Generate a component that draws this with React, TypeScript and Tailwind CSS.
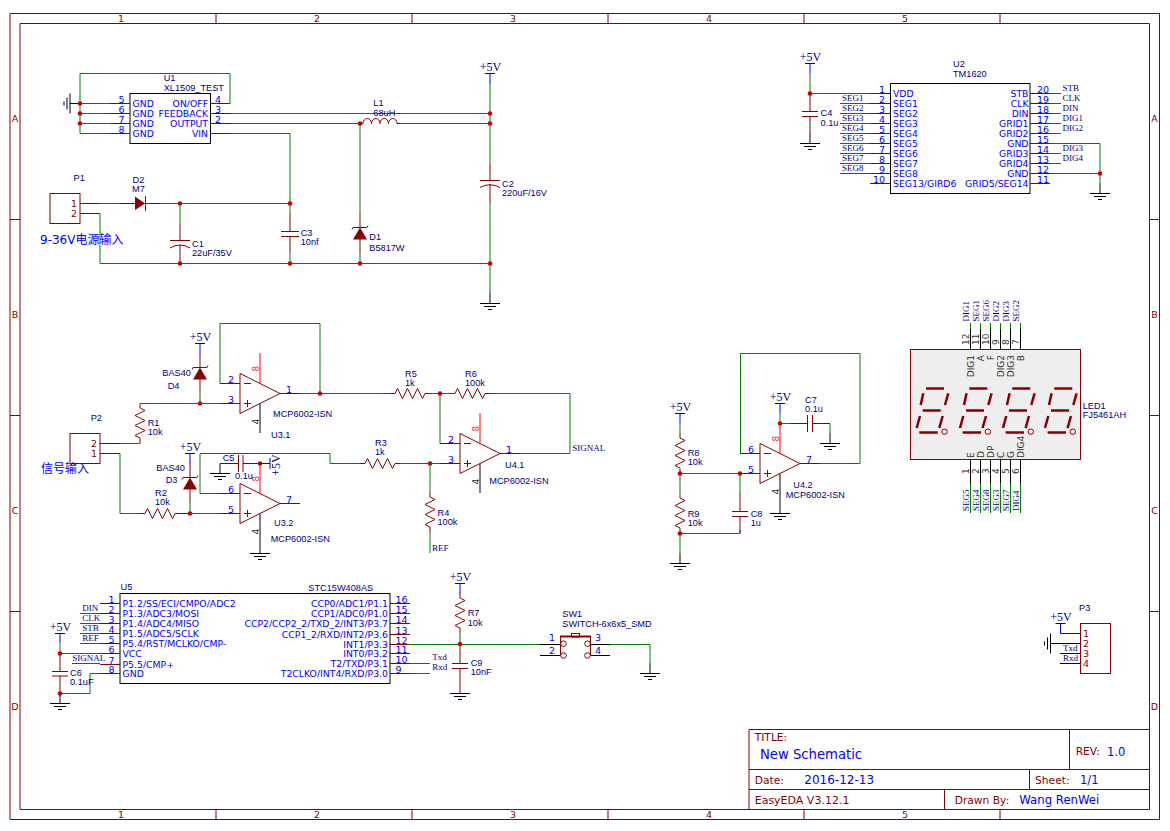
import type { ReactNode } from 'react';

// every class written out so Tailwind picks it up
const sans = "font-['DejaVu_Sans','Noto_Sans_CJK_SC',sans-serif]";
const arial = "font-['Liberation_Sans',sans-serif]";
const serif = "font-['Liberation_Serif',serif]";

const PIN_NAME = `${sans} text-[9.3px] fill-[#0000ff]`;
const PIN_NUM = `${sans} text-[9.5px] fill-[#0000ff]`;
const LABEL = `${arial} text-[9.2px] fill-[#000080]`;
const NET = `${serif} text-[9px] fill-[#000080]`;
const POWER = `${serif} text-[12px] fill-[#000080]`;
const RED_NUM = `${sans} text-[9.5px] fill-[#880000]`;
const LED_TXT = `${sans} text-[9px] fill-[#333333]`;
const TITLE_RED = `${sans} text-[10.7px] fill-[#880000]`;

type Anchor = 'start' | 'middle' | 'end';

function T({ x, y, c = LABEL, a, children }: { x: number; y: number; c?: string; a?: Anchor; children: ReactNode }) {
  return (
    <text x={x} y={y} textAnchor={a} className={c}>
      {children}
    </text>
  );
}

// text read from bottom to top
function RT({ x, y, c = LABEL, a, children }: { x: number; y: number; c?: string; a?: Anchor; children: ReactNode }) {
  return (
    <text x={x} y={y} textAnchor={a} transform={`rotate(-90 ${x} ${y})`} className={c}>
      {children}
    </text>
  );
}

const Wire = ({ d }: { d: string }) => <path d={d} className="fill-none stroke-[#008000] stroke-1" />;
const Pin = ({ d }: { d: string }) => <path d={d} className="fill-none stroke-[#880000] stroke-1" />;
const Blk = ({ d }: { d: string }) => <path d={d} className="fill-none stroke-black stroke-1" />;
const Blue = ({ d }: { d: string }) => <path d={d} className="fill-none stroke-[#0000ff] stroke-1" />;
const Navy = ({ d }: { d: string }) => <path d={d} className="fill-none stroke-[#000080] stroke-1" />;
const Hot = ({ d }: { d: string }) => <path d={d} className="fill-none stroke-[#ff0000] stroke-1" />;
const Dot = ({ x, y }: { x: number; y: number }) => <circle cx={x} cy={y} r={2.3} className="fill-[#cc0000]" />;

// ground symbol, bar at y
function Gnd({ x, y }: { x: number; y: number }) {
  return <Blk d={`M${x - 10} ${y}H${x + 10}M${x - 6} ${y + 3}H${x + 6}M${x - 2} ${y + 6}H${x + 2}`} />;
}

function GndLeft({ x, y }: { x: number; y: number }) {
  return <Blk d={`M${x} ${y - 10}V${y + 10}M${x - 3} ${y - 6}V${y + 6}M${x - 6} ${y - 2}V${y + 2}`} />;
}

// +5V flag with the short blue stub under it
function Vcc({ x, y }: { x: number; y: number }) {
  return (
    <>
      <T x={x + 0.5} y={y - 2.8} c={POWER} a="middle">+5V</T>
      <Navy d={`M${x - 5} ${y}H${x + 5}`} />
      <Blue d={`M${x} ${y}V${y + 10}`} />
    </>
  );
}

// 30px long zigzags
const ResH = ({ x, y }: { x: number; y: number }) => <Pin d={`M${x} ${y}l2.5 -5l5 10l5 -10l5 10l5 -10l5 10l2.5 -5`} />;
const ResV = ({ x, y }: { x: number; y: number }) => <Pin d={`M${x} ${y}l5 2.5l-10 5l10 5l-10 5l10 5l-10 5l5 2.5`} />;

function Opamp({ x, y, nums }: { x: number; y: number; nums: [string, string, string] }) {
  return (
    <>
      <path d={`M${x} ${y - 20}L${x + 40} ${y}L${x} ${y + 20}Z`} className="fill-white stroke-[#880000] stroke-1" />
      <Pin d={`M${x - 20} ${y - 10}H${x}M${x - 20} ${y + 10}H${x}M${x + 40} ${y}H${x + 60}`} />
      <Pin d={`M${x + 4} ${y - 10}h7M${x + 4} ${y + 10}h7M${x + 7.5} ${y + 6.5}v7`} />
      <T x={x - 9} y={y - 11} c={PIN_NUM} a="middle">{nums[0]}</T>
      <T x={x - 9} y={y + 9} c={PIN_NUM} a="middle">{nums[1]}</T>
      <T x={x + 49} y={y - 1} c={PIN_NUM} a="middle">{nums[2]}</T>
      <RT x={x + 19} y={y - 25} c={`${sans} text-[9px] fill-[#ff3030]`} a="middle">8</RT>
      <RT x={x + 19} y={y + 28} c={`${sans} text-[9px] fill-[#222222]`} a="middle">4</RT>
    </>
  );
}

// schottky pointing up, y is the tip
function DiodeUp({ x, y }: { x: number; y: number }) {
  return (
    <>
      <path d={`M${x} ${y}L${x - 7} ${y + 12}H${x + 7}Z`} className="fill-[#880000]" />
      <Pin d={`M${x - 8} ${y + 2}l1 -2h14l1 -2`} />
    </>
  );
}

function SevenSeg({ dx }: { dx: number }) {
  return (
    <g transform={`translate(${dx} 0)`}>
      <path
        d="M926 388.5H944M923.3 393.3L920.7 405M948.3 393.3L945 405M922.7 410.5H940.7M920 416L916.7 428M942.7 416L939.3 428M919.3 432.5H937.7"
        className="fill-none stroke-[#880000] stroke-[2.5px]"
      />
      <circle cx={944.5} cy={431.7} r={2.7} className="fill-none stroke-[#880000] stroke-1" />
    </g>
  );
}

const U2_LEFT = ['VDD', 'SEG1', 'SEG2', 'SEG3', 'SEG4', 'SEG5', 'SEG6', 'SEG7', 'SEG8', 'SEG13/GIRD6'];
const U2_RIGHT = [
  ['20', 'STB', 'STB'], ['19', 'CLK', 'CLK'], ['18', 'DIN', 'DIN'], ['17', 'GRID1', 'DIG1'], ['16', 'GRID2', 'DIG2'],
  ['15', 'GND', ''], ['14', 'GRID3', 'DIG3'], ['13', 'GRID4', 'DIG4'], ['12', 'GND', ''], ['11', 'GRID5/SEG14', ''],
];
const U5_LEFT: [number, string, string][] = [
  [603.5, 'P1.2/SS/ECI/CMPO/ADC2', ''],
  [613.5, 'P1.3/ADC3/MOSI', 'DIN'],
  [623.5, 'P1.4/ADC4/MISO', 'CLK'],
  [633.5, 'P1.5/ADC5/SCLK', 'STB'],
  [643.5, 'P5.4/RST/MCLKO/CMP-', 'REF'],
  [653.5, 'VCC', ''],
  [664.5, 'P5.5/CMP+', ''],
  [673.5, 'GND', ''],
];
const U5_RIGHT: [number, string, string][] = [
  [603.5, '16', 'CCP0/ADC1/P1.1'],
  [613.5, '15', 'CCP1/ADC0/P1.0'],
  [623.5, '14', 'CCP2/CCP2_2/TXD_2/INT3/P3.7'],
  [634.5, '13', 'CCP1_2/RXD/INT2/P3.6'],
  [644.5, '12', 'INT1/P3.3'],
  [653.5, '11', 'INT0/P3.2'],
  [663.5, '10', 'T2/TXD/P3.1'],
  [673.5, '9', 'T2CLKO/INT4/RXD/P3.0'],
];
const LED_X = [970.5, 980.5, 990.5, 1000.5, 1010.5, 1020.5];

export default function App() {
  return (
    <div className="w-[1170px] h-[831px] bg-white overflow-hidden">
      <svg width={1170} height={831} viewBox="0 0 1170 831">
        {/* sheet frame */}
        <Pin d="M10 13.5H1159.5V819.5H10ZM20 23.5H1149.5V809.5H20Z" />
        <Pin d="M216 13.5V23.5M412 13.5V23.5M608 13.5V23.5M804 13.5V23.5M1000 13.5V23.5" />
        <Pin d="M216 809.5V819.5M412 809.5V819.5M608 809.5V819.5M804 809.5V819.5M1000 809.5V819.5" />
        <Pin d="M10 219.5H20M10 415.5H20M10 611.5H20M1149.5 219.5H1159.5M1149.5 415.5H1159.5M1149.5 611.5H1159.5" />
        {['1', '2', '3', '4', '5'].map((n, i) => (
          <g key={n}>
            <T x={121 + i * 196} y={22} c={RED_NUM} a="middle">{n}</T>
            <T x={121 + i * 196} y={818} c={RED_NUM} a="middle">{n}</T>
          </g>
        ))}
        {['A', 'B', 'C', 'D'].map((n, i) => (
          <g key={n}>
            <T x={15} y={121.5 + i * 196} c={RED_NUM} a="middle">{n}</T>
            <T x={1154.5} y={121.5 + i * 196} c={RED_NUM} a="middle">{n}</T>
          </g>
        ))}

        {/* U1 */}
        <Wire d="M80 133.5V73.5H230V103.5M80 103.5H110M80 113.5H110M80 123.5H110M80 133.5H110" />
        <Blk d="M70 103.5H80" />
        <GndLeft x={70} y={103.5} />
        <Dot x={80} y={103.5} />
        <Dot x={80} y={113.5} />
        <Dot x={80} y={123.5} />
        <rect x={130} y={93.5} width={80.5} height={50} className="fill-white stroke-black stroke-1" />
        <Pin d="M110 103.5H130M110 113.5H130M110 123.5H130M110 133.5H130M210 103.5H230M210 113.5H230M210 123.5H230M210 133.5H230" />
        <T x={163.7} y={81}>U1</T>
        <T x={163.7} y={91}>XL1509_TEST</T>
        {['5', '6', '7', '8'].map((n, i) => (
          <g key={n}>
            <T x={121.5} y={103 + i * 10} c={PIN_NUM} a="middle">{n}</T>
            <T x={132.5} y={106.5 + i * 10} c={PIN_NAME}>GND</T>
          </g>
        ))}
        {[['4', 'ON/OFF'], ['3', 'FEEDBACK'], ['2', 'OUTPUT'], ['', 'VIN']].map(([n, s], i) => (
          <g key={s}>
            <T x={218} y={103 + i * 10} c={PIN_NUM} a="middle">{n}</T>
            <T x={208} y={106.5 + i * 10} c={PIN_NAME} a="end">{s}</T>
          </g>
        ))}
        <Wire d="M230 113.5H490M230 123.5H360M400 123.5H490M230 133.5H290V203.5" />
        <Dot x={360} y={123.5} />
        <T x={373.3} y={106}>L1</T>
        <T x={373.3} y={116}>68uH</T>
        <Pin d="M360 123.5H363a4.25 5 0 0 1 8.5 0a4.25 5 0 0 1 8.5 0a4.25 5 0 0 1 8.5 0a4.25 5 0 0 1 8.5 0H400" />

        {/* P1, D2, input caps */}
        <rect x={50} y={193.5} width={30} height={30} className="fill-none stroke-[#880000] stroke-1" />
        <Pin d="M80 203.5H100M80 213.5H100" />
        <T x={74} y={206.5} c={RED_NUM} a="middle">1</T>
        <T x={74} y={216.5} c={RED_NUM} a="middle">2</T>
        <T x={73.5} y={180.5}>P1</T>
        <T x={40} y={244} c={`${sans} text-[12px] fill-[#0000ff]`}>9-36V电源输入</T>
        <Wire d="M100 203.5H120M160 203.5H290M100 213.5V263.5H490" />
        <Pin d="M120 203.5H160" />
        <path d="M135 196.5L145 203.5L135 210Z" className="fill-[#880000]" />
        <Pin d="M145.5 196V211" />
        <T x={132.5} y={183}>D2</T>
        <T x={132} y={192.3}>M7</T>
        <Wire d="M180 203.5V223.5M290 203.5V213M290 253V263.5M360 123.5V213M360 253V263.5M490 83V163M490 203V293" />
        <Pin d="M180 223.5V240.5M180 245V263.5M170 240.5H190M170 248Q180 242 190 248" />
        <T x={192} y={247}>C1</T>
        <T x={192} y={255.7}>22uF/35V</T>
        <Pin d="M290 213V231.5M290 236.5V253M281 231.5H299M281 236.5H299" />
        <T x={300.7} y={236}>C3</T>
        <T x={300.7} y={245}>10nf</T>
        <Pin d="M360 213V227M360 239V253" />
        <DiodeUp x={360} y={227.5} />
        <T x={369.3} y={239.7}>D1</T>
        <T x={369.3} y={251}>B5817W</T>
        <Dot x={180} y={203.5} />
        <Dot x={290} y={203.5} />
        <Dot x={180} y={263.5} />
        <Dot x={290} y={263.5} />
        <Dot x={360} y={263.5} />

        {/* C2 rail */}
        <Vcc x={490} y={73.5} />
        <Pin d="M490 163V180.5M490 184V203M480 180.5H500M480 187.5Q490 182 500 187.5" />
        <T x={502} y={186.7}>C2</T>
        <T x={502} y={195.7}>220uF/16V</T>
        <Blk d="M490 293V303.5" />
        <Gnd x={490} y={303.5} />
        <Dot x={490} y={113.5} />
        <Dot x={490} y={123.5} />
        <Dot x={490} y={263.5} />

        {/* U2 */}
        <Vcc x={810} y={63.5} />
        <Wire d="M810 73.5V93.5M810 93.5H870" />
        <Pin d="M810 93.5V111.5M810 116.5V133M802 111.5H818M802 116.5H818" />
        <Blk d="M810 133V143.5" />
        <Gnd x={810} y={143.5} />
        <Dot x={810} y={93.5} />
        <T x={820.5} y={116}>C4</T>
        <T x={820.5} y={125.7}>0.1u</T>
        <T x={953} y={67}>U2</T>
        <T x={953} y={77}>TM1620</T>
        <rect x={890.5} y={83.5} width={139.5} height={110} className="fill-white stroke-black stroke-1" />
        {U2_LEFT.map((s, i) => {
          const y = 93.5 + i * 10;
          return (
            <g key={s}>
              {i > 0 && i < 9 && <Wire d={`M840 ${y}H870`} />}
              {i > 0 && i < 9 && <T x={842} y={y - 2.5} c={NET}>{s}</T>}
              <Pin d={`M870 ${y}H890`} />
              <T x={885} y={y - 1} c={PIN_NUM} a="end">{i + 1}</T>
              <T x={893} y={y + 3} c={PIN_NAME}>{s}</T>
            </g>
          );
        })}
        {U2_RIGHT.map(([n, s, net], i) => {
          const y = 93.5 + i * 10;
          return (
            <g key={n}>
              {net && <Wire d={`M1050 ${y}H1061`} />}
              {net && <T x={1062.5} y={y - 3} c={NET}>{net}</T>}
              <Pin d={`M1030 ${y}H1050`} />
              <T x={1037} y={y - 1} c={PIN_NUM}>{n}</T>
              <T x={1028.5} y={y + 3} c={PIN_NAME} a="end">{s}</T>
            </g>
          );
        })}
        <Wire d="M1050 143.5H1100V183M1050 173.5H1100" />
        <Blk d="M1100 183V193.5" />
        <Gnd x={1100} y={193.5} />
        <Dot x={1100} y={173.5} />

        {/* U3.1 with P2, R1, D4 */}
        <Wire d="M220 383.5V323.5H320V393.5M300 393.5H390M430 393.5H455M490 393.5H570V453.5H520M440 393.5V443.5" />
        <Hot d="M260 353V383" />
        <Blk d="M260 403V433" />
        <Opamp x={240} y={393.5} nums={['2', '3', '1']} />
        <Dot x={320} y={393.5} />
        <T x={273} y={417}>MCP6002-ISN</T>
        <T x={271} y={438}>U3.1</T>

        <rect x={70} y={433.5} width={30} height={30} className="fill-none stroke-[#880000] stroke-1" />
        <Pin d="M100 443.5H120M100 453.5H120" />
        <T x={94} y={446.5} c={RED_NUM} a="middle">2</T>
        <T x={94} y={456.5} c={RED_NUM} a="middle">1</T>
        <T x={90.7} y={420.7}>P2</T>
        <T x={41} y={473.3} c={`${sans} text-[12px] fill-[#0000ff]`}>信号输入</T>
        <Wire d="M120 443.5H140M140 403.5H220M120 453.5V513.5H140M190 513.5H220" />
        <Pin d="M140 403.5V408M140 438V443.5" />
        <ResV x={140} y={408} />
        <T x={147.7} y={425.7}>R1</T>
        <T x={147.7} y={435}>10k</T>
        <Dot x={200} y={403.5} />
        <Vcc x={200} y={343.5} />
        <Pin d="M200 353V367M200 379V393" />
        <DiodeUp x={200} y={367.5} />
        <Wire d="M200 393V403.5" />
        <T x={162.3} y={376}>BAS40</T>
        <T x={167.7} y={389}>D4</T>

        {/* U3.2 with R2, D3, C5 */}
        <Pin d="M140 513.5H145M175 513.5H190" />
        <ResH x={145} y={513.5} />
        <T x={155} y={495.7}>R2</T>
        <T x={155} y={505}>10k</T>
        <Vcc x={190} y={453.5} />
        <Pin d="M190 463V477M190 489V503" />
        <DiodeUp x={190} y={477.5} />
        <Wire d="M190 503V513.5" />
        <Dot x={190} y={513.5} />
        <T x={156.3} y={471}>BAS40</T>
        <T x={165.7} y={483.3}>D3</T>
        <Wire d="M220 493.5H200V453.5H330V463.5H360M400 463.5H440" />
        <Hot d="M260 463.5V493" />
        <Blk d="M260 513V553.5" />
        <Opamp x={240} y={503.5} nums={['6', '5', '7']} />
        <Gnd x={260} y={553.5} />
        <T x={274} y={525.7}>U3.2</T>
        <T x={270.7} y={541.7}>MCP6002-ISN</T>
        <Pin d="M220 463.5H238.5M238.5 455V472M243 455V472M243 463.5H260" />
        <Blk d="M220 463.5V473.5" />
        <Gnd x={220} y={473.5} />
        <Dot x={260} y={463.5} />
        <Blue d="M260 463.5H270" />
        <Navy d="M270 458V469" />
        <RT x={280} y={465} c={`${serif} text-[12px] fill-[#000080]`} a="middle">+5V</RT>
        <T x={222.7} y={461}>C5</T>
        <T x={235} y={479}>0.1u</T>

        {/* U4.1 */}
        <Pin d="M390 393.5H395M425 393.5H430M485 393.5H490" />
        <ResH x={395} y={393.5} />
        <ResH x={455} y={393.5} />
        <T x={405} y={376.7}>R5</T>
        <T x={405} y={385.7}>1k</T>
        <T x={465} y={376.7}>R6</T>
        <T x={465} y={385.7}>100k</T>
        <Dot x={440} y={393.5} />
        <Pin d="M360 463.5H365M395 463.5H400" />
        <ResH x={365} y={463.5} />
        <T x={375} y={445.7}>R3</T>
        <T x={375} y={455}>1k</T>
        <Hot d="M480 413V443" />
        <Blk d="M480 463V493" />
        <Opamp x={460} y={453.5} nums={['2', '3', '1']} />
        <T x={505} y={468.3}>U4.1</T>
        <T x={489.3} y={484.3}>MCP6002-ISN</T>
        <T x={572.3} y={450.7} c={NET}>SIGNAL</T>
        <Dot x={430} y={463.5} />
        <Wire d="M430 463.5V493M430 533V553" />
        <Pin d="M430 493V497M430 527V533" />
        <ResV x={430} y={497} />
        <T x={437.5} y={516}>R4</T>
        <T x={437.5} y={525}>100k</T>
        <T x={432} y={551} c={NET}>REF</T>

        {/* U4.2 */}
        <Vcc x={680} y={413.5} />
        <Wire d="M680 423.5V433M680 473.5V495M680 533.5V553M680 473.5H740M740.5 453.5V353.5H860V463.5H820M740 473.5V493M680 533.5H740V530" />
        <Pin d="M680 433V438M680 468V473.5M680 495V498M680 528V533.5" />
        <ResV x={680} y={438} />
        <ResV x={680} y={498} />
        <Blk d="M680 553V563.5" />
        <Gnd x={680} y={563.5} />
        <Dot x={680} y={473.5} />
        <Dot x={680} y={533.5} />
        <Dot x={740} y={473.5} />
        <T x={687.7} y={455.7}>R8</T>
        <T x={687.7} y={465}>10k</T>
        <T x={687.7} y={516.7}>R9</T>
        <T x={687.7} y={525.7}>10k</T>
        <Pin d="M740 493V511.5M740 516.5V533M732 511.5H748M732 516.5H748" />
        <T x={750.7} y={516.7}>C8</T>
        <T x={750.7} y={525.7}>1u</T>
        <Vcc x={780} y={403.5} />
        <Wire d="M780 413.5V423.5H790M830 423.5V433" />
        <Pin d="M790 423.5H807.5M807.5 415V432M812.5 415V432M812.5 423.5H830" />
        <Blk d="M830 433V443.5" />
        <Gnd x={830} y={443.5} />
        <Dot x={780} y={423.5} />
        <T x={805} y={403}>C7</T>
        <T x={805} y={412}>0.1u</T>
        <Hot d="M780 423.5V453" />
        <Blk d="M780 473V513.5" />
        <Opamp x={760} y={463.5} nums={['6', '5', '7']} />
        <Gnd x={780} y={513.5} />
        <T x={793.3} y={488.3}>U4.2</T>
        <T x={785.7} y={498.3}>MCP6002-ISN</T>

        {/* LED1 */}
        <rect x={910.5} y={349.5} width={170} height={110} className="fill-[#eeeeee] stroke-[#880000] stroke-1" />
        {[0, 43.3, 86.3, 128.3].map((dx) => (
          <SevenSeg key={dx} dx={dx} />
        ))}
        {LED_X.map((x, i) => (
          <g key={x}>
            <Wire d={`M${x} 323V329M${x} 483V513`} />
            <Blk d={`M${x} 329V349.5M${x} 459.5V483`} />
            <RT x={x - 1.5} y={321.5} c={NET}>{['DIG1', 'SEG1', 'SEG6', 'DIG2', 'DIG3', 'SEG2'][i]}</RT>
            <RT x={x - 1.5} y={345} c={LED_TXT}>{['12', '11', '10', '9', '8', '7'][i]}</RT>
            <RT x={x + 3} y={355} c={LED_TXT} a="end">{['DIG1', 'A', 'F', 'DIG2', 'DIG3', 'B'][i]}</RT>
            <RT x={x + 3} y={458} c={LED_TXT}>{['E', 'D', 'DP', 'C', 'G', 'DIG4'][i]}</RT>
            <RT x={x - 1.5} y={474} c={LED_TXT}>{String(i + 1)}</RT>
            <RT x={x - 1.5} y={511} c={NET}>{['SEG5', 'SEG4', 'SEG8', 'SEG3', 'SEG7', 'DIG4'][i]}</RT>
          </g>
        ))}
        <T x={1082.7} y={409.3}>LED1</T>
        <T x={1082.7} y={418.3}>FJ5461AH</T>

        {/* U5 */}
        <T x={120.5} y={590}>U5</T>
        <T x={308.3} y={590.7}>STC15W408AS</T>
        <rect x={120} y={593.5} width={270} height={90} className="fill-white stroke-black stroke-1" />
        {U5_LEFT.map(([y, s, net], i) => (
          <g key={s}>
            {net && <Wire d={`M80 ${y}H100`} />}
            {net && <T x={82.3} y={y - 2.8} c={NET}>{net}</T>}
            <Pin d={`M100 ${y}H120`} />
            <T x={114.5} y={y - 1} c={PIN_NUM} a="end">{i + 1}</T>
            <T x={122.5} y={y + 3} c={PIN_NAME}>{s}</T>
          </g>
        ))}
        {U5_RIGHT.map(([y, n, s]) => (
          <g key={n}>
            <Pin d={`M390 ${y}H410`} />
            <T x={395.5} y={y - 1} c={PIN_NUM}>{n}</T>
            <T x={388} y={y + 3} c={PIN_NAME} a="end">{s}</T>
          </g>
        ))}
        <Vcc x={60} y={633.5} />
        <Wire d="M60 643.5V653.5H100M72 663.5H100M100 673.5H90V693.5H60" />
        <T x={72.3} y={661} c={NET}>SIGNAL</T>
        <Pin d="M60 653.5V671.5M60 676V693.5M52 671.5H68M52 676H68" />
        <T x={70} y={675.7}>C6</T>
        <T x={70} y={685}>0.1uF</T>
        <Blk d="M60 693.5V703.5" />
        <Gnd x={60} y={703.5} />
        <Dot x={60} y={653.5} />
        <Dot x={60} y={693.5} />
        <Wire d="M410 663.5H430M410 673.5H430" />
        <T x={432.3} y={660} c={NET}>Txd</T>
        <T x={432.3} y={670} c={NET}>Rxd</T>

        {/* R7, C9 and the switch */}
        <Vcc x={460} y={583.5} />
        <Pin d="M460 593V598M460 628V633" />
        <ResV x={460} y={598} />
        <Wire d="M460 633V644.5M410 644.5H540M610 644.5H650V663" />
        <Pin d="M460 644.5V663.5M460 668.5V693.5M452 663.5H468M452 668.5H468" />
        <Gnd x={460} y={693.5} />
        <Dot x={460} y={644} />
        <T x={467.7} y={616}>R7</T>
        <T x={467.7} y={625.7}>10k</T>
        <T x={470.7} y={666}>C9</T>
        <T x={470.7} y={675}>10nF</T>
        <T x={562.3} y={617.3}>SW1</T>
        <T x={562.3} y={627.3}>SWITCH-6x6x5_SMD</T>
        <Blk d="M540 644.5H560M540 655.5H560M590 644.5H610M590 655.5H610" />
        <path d="M560 636.5H591" className="fill-none stroke-[#880000] stroke-2" />
        <rect x={571.5} y={633.5} width={8} height={3.5} className="fill-none stroke-[#880000] stroke-1" />
        <Pin d="M560.5 637V656M590.5 637V656" />
        {[[563.5, 643.7], [563.5, 655.5], [587.5, 643.7], [587.5, 655.5]].map(([cx, cy]) => (
          <circle key={`${cx}-${cy}`} cx={cx} cy={cy} r={2.8} className="fill-white stroke-[#880000] stroke-1" />
        ))}
        <T x={552} y={641} c={PIN_NUM} a="middle">1</T>
        <T x={552} y={654} c={PIN_NUM} a="middle">2</T>
        <T x={598} y={641} c={PIN_NUM} a="middle">3</T>
        <T x={598} y={654} c={PIN_NUM} a="middle">4</T>
        <Blk d="M650 663V673.5" />
        <Gnd x={650} y={673.5} />

        {/* P3 */}
        <T x={1079} y={611}>P3</T>
        <Vcc x={1060.5} y={623.5} />
        <Blue d="M1060.5 633.5H1080" />
        <Blk d="M1050.5 643.5H1080M1060 663.5H1080" />
        <Navy d="M1060 653.5H1080" />
        <GndLeft x={1050.5} y={643.5} />
        <rect x={1080.5} y={623.5} width={30} height={50} className="fill-none stroke-[#880000] stroke-1" />
        {['1', '2', '3', '4'].map((n, i) => (
          <T key={n} x={1083} y={636.5 + i * 10} c={RED_NUM}>{n}</T>
        ))}
        <T x={1063} y={650.7} c={NET}>Txd</T>
        <T x={1063} y={660.7} c={NET}>Rxd</T>

        {/* title block */}
        <Pin d="M749 809.5V729.5H1149.5M749 769.5H1149.5M749 789.5H1149.5M1069.5 729.5V769.5M1029.5 769.5V789.5M944.5 789.5V809.5" />
        <T x={754.7} y={741.3} c={TITLE_RED}>TITLE:</T>
        <T x={760} y={759.3} c={`${sans} text-[13.2px] fill-[#0000ff]`}>New Schematic</T>
        <T x={1075.7} y={755.3} c={TITLE_RED}>REV:</T>
        <T x={1107} y={756} c={`${sans} text-[11.5px] fill-[#0000ff]`}>1.0</T>
        <T x={754.7} y={784.3} c={TITLE_RED}>Date:</T>
        <T x={804.3} y={784} c={`${sans} text-[12px] fill-[#0000ff]`}>2016-12-13</T>
        <T x={1035} y={784.3} c={TITLE_RED}>Sheet:</T>
        <T x={1080} y={784} c={`${sans} text-[11.5px] fill-[#0000ff]`}>1/1</T>
        <T x={754.7} y={804.3} c={`${sans} text-[11px] fill-[#880000]`}>EasyEDA V3.12.1</T>
        <T x={954.7} y={804.3} c={TITLE_RED}>Drawn By:</T>
        <T x={1019.3} y={804} c={`${sans} text-[11.7px] fill-[#0000ff]`}>Wang RenWei</T>
      </svg>
    </div>
  );
}
